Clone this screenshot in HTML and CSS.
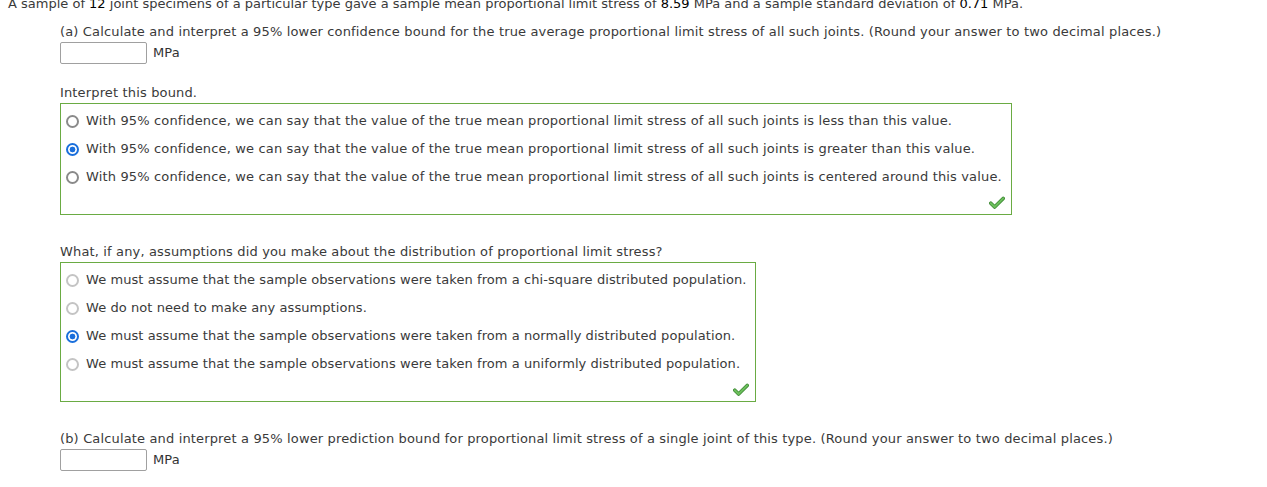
FILE: index.html
```html
<!DOCTYPE html>
<html>
<head>
<meta charset="utf-8">
<link rel="stylesheet" href="styles.css">
</head>
<body>
<div class="page">
  <p class="intro">A sample of <span class="num">12</span> joint specimens of a particular type gave a sample mean proportional limit stress of <span class="num">8.59</span> MPa and a sample standard deviation of <span class="num">0.71</span> MPa.</p>
  <div class="part">
    <p class="line">(a) Calculate and interpret a 95% lower confidence bound for the true average proportional limit stress of all such joints. (Round your answer to two decimal places.)</p>
    <div class="answer"><span class="field"></span><span class="unit">MPa</span></div>

    <p class="line label">Interpret this bound.</p>
    <div class="choices wide">
      <div class="option"><span class="radio dark"></span><span>With 95% confidence, we can say that the value of the true mean proportional limit stress of all such joints is less than this value.</span></div>
      <div class="option"><span class="radio on"></span><span>With 95% confidence, we can say that the value of the true mean proportional limit stress of all such joints is greater than this value.</span></div>
      <div class="option"><span class="radio dark"></span><span>With 95% confidence, we can say that the value of the true mean proportional limit stress of all such joints is centered around this value.</span></div>
      <div class="mark"><svg width="16" height="14" viewBox="0 0 16 14"><path d="M1.8 7.2 L5.6 11 L14.2 2.4" fill="none" stroke="#3f8a36" stroke-width="3.6" stroke-linecap="round" stroke-linejoin="round"/><path d="M1.8 7.2 L5.6 11 L14.2 2.4" fill="none" stroke="#6cbf5c" stroke-width="2" stroke-linecap="round" stroke-linejoin="round"/></svg></div>
    </div>

    <p class="line label2">What, if any, assumptions did you make about the distribution of proportional limit stress?</p>
    <div class="choices narrow">
      <div class="option"><span class="radio light"></span><span>We must assume that the sample observations were taken from a chi-square distributed population.</span></div>
      <div class="option"><span class="radio light"></span><span>We do not need to make any assumptions.</span></div>
      <div class="option"><span class="radio on"></span><span>We must assume that the sample observations were taken from a normally distributed population.</span></div>
      <div class="option"><span class="radio light"></span><span>We must assume that the sample observations were taken from a uniformly distributed population.</span></div>
      <div class="mark"><svg width="16" height="14" viewBox="0 0 16 14"><path d="M1.8 7.2 L5.6 11 L14.2 2.4" fill="none" stroke="#3f8a36" stroke-width="3.6" stroke-linecap="round" stroke-linejoin="round"/><path d="M1.8 7.2 L5.6 11 L14.2 2.4" fill="none" stroke="#6cbf5c" stroke-width="2" stroke-linecap="round" stroke-linejoin="round"/></svg></div>
    </div>

    <p class="line label2">(b) Calculate and interpret a 95% lower prediction bound for proportional limit stress of a single joint of this type. (Round your answer to two decimal places.)</p>
    <div class="answer"><span class="field"></span><span class="unit">MPa</span></div>
  </div>
</div>
</body>
</html>
```

FILE: styles.css
```css
html, body {
  margin: 0;
  padding: 0;
  background: #ffffff;
}
body {
  font-family: "DejaVu Sans", Verdana, sans-serif;
  font-size: 13px;
  line-height: 16px;
  letter-spacing: 0.15px;
  color: #3a3a3a;
  overflow: hidden;
}
.page {
  padding-left: 8px;
}
p {
  margin: 0;
}
.intro {
  margin-top: -4px;
  white-space: nowrap;
  letter-spacing: 0;
}
.num {
  color: #000;
}
.part {
  margin-left: 52px;
  margin-top: 12px;
}
.line {
  white-space: nowrap;
}
.answer {
  display: flex;
  align-items: center;
  gap: 6px;
  margin-top: 2px;
  height: 22px;
}
.field {
  display: block;
  width: 85px;
  height: 20px;
  border: 1px solid #a0a0a0;
  border-radius: 2px;
  background: #fff;
}
.unit {
  color: #333;
}
.label {
  margin-top: 21px;
}
.label2 {
  margin-top: 29px;
}
.choices {
  box-sizing: border-box;
  margin-top: 2px;
  border: 1px solid #6aab43;
  padding: 3px 6px 0 5px;
}
.choices.wide {
  width: 952px;
}
.choices.narrow {
  width: 696px;
  letter-spacing: 0.07px;
}
.option {
  display: flex;
  align-items: center;
  height: 28px;
  gap: 7px;
  white-space: nowrap;
}
.radio {
  box-sizing: border-box;
  width: 13px;
  height: 13px;
  border-radius: 50%;
  flex: none;
  background: #fff;
}
.radio.dark {
  border: 2px solid #8a8a8a;
}
.radio.light {
  border: 2px solid #c4c4c4;
}
.radio.on {
  border: 2px solid #1a6fdc;
  background: radial-gradient(circle, #1a6fdc 0 2.6px, #fff 3.2px);
}
.mark {
  display: flex;
  justify-content: flex-end;
  align-items: center;
  height: 23px;
}
.mark svg {
  display: block;
  margin-top: 1px;
}
```
